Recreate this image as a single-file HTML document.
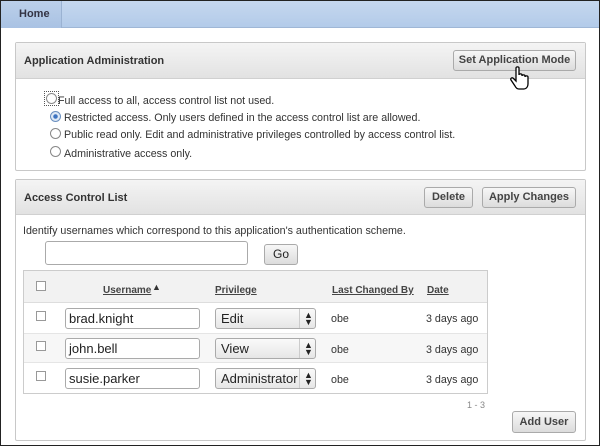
<!DOCTYPE html><html><head><style>
*{box-sizing:border-box}body{margin:0;width:600px;height:446px;background:#fff;font-family:"Liberation Sans",sans-serif;font-size:10.7px;color:#333;position:relative;overflow:hidden}
.frame{position:absolute;left:0;top:0;width:600px;height:446px;border:1px solid #222;pointer-events:none}
.a{position:absolute}
.nav{left:0;top:0;width:600px;height:28px;background:linear-gradient(#c6d8ef,#b3cbe9);border-bottom:1px solid #9fb7d6}
.home{left:0;top:0;width:62px;height:28px;background:linear-gradient(#bcd0ea,#a9c2e3);border-right:1px solid #9ab2d2;font-weight:bold;color:#334;font-size:11px;line-height:28px;padding-left:19px}
.panel{border:1px solid #c8c8c8;border-radius:2px;background:#fff}
.hd{background:linear-gradient(#f4f4f4,#e2e2e2);border-bottom:1px solid #d0d0d0;font-weight:bold;font-size:11px;color:#333}
.btn{border:1px solid #aaa;border-radius:3px;background:linear-gradient(#f7f7f7,#dcdcdc);font-weight:bold;font-size:11px;color:#444;text-align:center;line-height:19px}
.rad{width:11px;height:11px;border:1px solid #888;border-radius:50%;background:#fff}
.t{white-space:nowrap}
.inp{border:1px solid #aaa;border-radius:3px;background:#fff;font-size:13px;color:#222;padding-left:3px;line-height:19px}
.sel{border:1px solid #aaa;border-radius:3px;background:linear-gradient(#fafafa,#e6e6e6);font-size:13px;color:#222;padding-left:5px;line-height:19px}
.cb{width:10px;height:10px;border:1px solid #999;background:#fff}
.th{font-weight:bold;text-decoration:underline;color:#444;font-size:10px}
</style></head><body>
<div class="a nav"></div><div class="a home">Home</div>
<div class="a panel" style="left:15px;top:42px;width:571px;height:129px"></div>
<div class="a hd" style="left:16px;top:43px;width:569px;height:36px;padding:12px 0 0 8px">Application Administration</div>
<div class="a btn" style="left:453px;top:50px;width:123px;height:21px">Set Application Mode</div>
<svg class="a" style="left:510px;top:66px" width="20" height="26" viewBox="0 0 20 26"><path d="M6 2c0-1.5 3-1.5 3 0v7c0-1.5 3-1.5 3 0v1c0-1.5 3-1.5 3 0v1c0-1.5 3-1.5 3 0v7c0 3-2 5-4 5H9c-2 0-3-1-4-3l-4-6c-1-1.5 1-3 2.5-1.5L6 15z" fill="#fff" stroke="#000" stroke-width="1.3"/></svg>
<div class="a" style="left:44px;top:91px;width:15px;height:15px;border:1px dotted #555"></div>
<div class="a rad" style="left:46px;top:93px"></div>
<div class="a t" style="left:58px;top:95px">Full access to all, access control list not used.</div>
<div class="a rad" style="left:50px;top:111px;border-color:#6a8fbf;background:radial-gradient(#3d73c0 30%,#dde8f5 40%)"></div>
<div class="a t" style="left:64px;top:112px">Restricted access. Only users defined in the access control list are allowed.</div>
<div class="a rad" style="left:50px;top:128px"></div>
<div class="a t" style="left:64px;top:129px">Public read only. Edit and administrative privileges controlled by access control list.</div>
<div class="a rad" style="left:50px;top:146px"></div>
<div class="a t" style="left:64px;top:148px">Administrative access only.</div>

<div class="a panel" style="left:15px;top:179px;width:571px;height:262px"></div>
<div class="a hd" style="left:16px;top:180px;width:569px;height:35px;padding:12px 0 0 8px">Access Control List</div>
<div class="a btn" style="left:424px;top:187px;width:49px;height:21px">Delete</div>
<div class="a btn" style="left:482px;top:187px;width:94px;height:21px">Apply Changes</div>
<div class="a t" style="left:23px;top:225px">Identify usernames which correspond to this application's authentication scheme.</div>
<div class="a inp" style="left:45px;top:241px;width:203px;height:24px"></div>
<div class="a btn" style="left:264px;top:244px;width:34px;height:21px;font-weight:normal;font-size:12px;color:#222">Go</div>
<div class="a" style="left:23px;top:270px;width:465px;height:124px;border:1px solid #ccc"></div>
<div class="a" style="left:24px;top:271px;width:463px;height:32px;background:#f2f2f2;border-bottom:1px solid #ddd"></div>
<div class="a" style="left:24px;top:333px;width:463px;height:30px;background:#f7f7f7;border-top:1px solid #e5e5e5;border-bottom:1px solid #e5e5e5"></div>
<div class="a cb" style="left:36px;top:281px"></div>
<div class="a th t" style="left:103px;top:285px">Username</div><div class="a t" style="left:152px;top:282px;font-size:9px">▲</div>
<div class="a th t" style="left:215px;top:285px">Privilege</div>
<div class="a th t" style="left:332px;top:285px">Last Changed By</div>
<div class="a th t" style="left:427px;top:285px">Date</div>

<div class="a cb" style="left:36px;top:311px"></div>
<div class="a inp" style="left:65px;top:308px;width:135px;height:21px">brad.knight</div>
<div class="a sel" style="left:215px;top:308px;width:101px;height:21px">Edit</div>
<div class="a t" style="left:331px;top:313px">obe</div><div class="a t" style="left:426px;top:313px">3 days ago</div>
<div class="a cb" style="left:36px;top:341px"></div>
<div class="a inp" style="left:65px;top:338px;width:135px;height:21px">john.bell</div>
<div class="a sel" style="left:215px;top:338px;width:101px;height:21px">View</div>
<div class="a t" style="left:331px;top:344px">obe</div><div class="a t" style="left:426px;top:344px">3 days ago</div>
<div class="a cb" style="left:36px;top:371px"></div>
<div class="a inp" style="left:65px;top:368px;width:135px;height:21px">susie.parker</div>
<div class="a sel" style="left:215px;top:368px;width:101px;height:21px">Administrator</div>
<div class="a t" style="left:331px;top:374px">obe</div><div class="a t" style="left:426px;top:374px">3 days ago</div>
<div class="a" style="left:299px;top:309px;width:1px;height:19px;background:#ccc"></div>
<div class="a" style="left:299px;top:339px;width:1px;height:19px;background:#ccc"></div>
<div class="a" style="left:299px;top:369px;width:1px;height:19px;background:#ccc"></div>
<div class="a t" style="left:304px;top:312px;font-size:9px;line-height:7px;color:#222">▲<br>▼</div>
<div class="a t" style="left:304px;top:342px;font-size:9px;line-height:7px;color:#222">▲<br>▼</div>
<div class="a t" style="left:304px;top:372px;font-size:9px;line-height:7px;color:#222">▲<br>▼</div>
<div class="a t" style="left:467px;top:400px;font-size:9px;color:#888">1 - 3</div>
<div class="a btn" style="left:512px;top:411px;width:64px;height:22px;line-height:20px">Add User</div>
<div class="frame"></div>
</body></html>
